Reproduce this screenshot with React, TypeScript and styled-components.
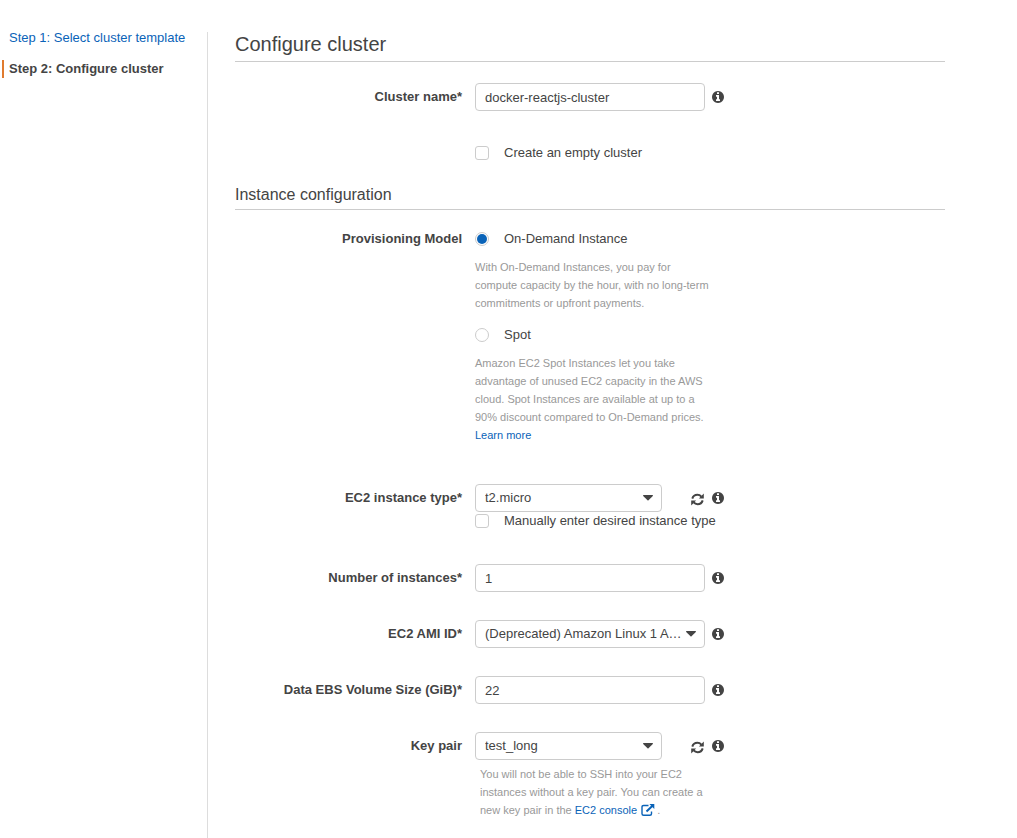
import React, { useState } from "react";
import styled, { createGlobalStyle } from "styled-components";

const ink = "#444444";
const link = "#0a63b8";
const line = "#cccccc";

const GlobalStyle = createGlobalStyle`
  * { box-sizing: border-box; }
  body {
    margin: 0;
    background: #ffffff;
    color: ${ink};
    font-family: "Liberation Sans", Arial, sans-serif;
    font-size: 13px;
    line-height: 18px;
  }
  button, input, select { font: inherit; color: inherit; }
  a { color: ${link}; text-decoration: none; }
  a:hover { text-decoration: underline; }
`;

const Page = styled.div`
  display: flex;
  min-height: 100vh;
  padding-top: 32px;
`;

const Steps = styled.nav`
  flex: 0 0 208px;
  border-right: 1px solid #dddddd;
`;

const StepList = styled.ol`
  display: flex;
  flex-direction: column;
  gap: 16px;
  margin: 0;
  padding: 0 0 0 2px;
  list-style: none;
`;

const Step = styled.li<{ $current?: boolean }>`
  padding-left: 5px;
  border-left: 2px solid ${(p) => (p.$current ? "#e07b2f" : "transparent")};
  font-weight: ${(p) => (p.$current ? 700 : 400)};
  line-height: ${(p) => (p.$current ? "18px" : "12px")};
`;

const Main = styled.main`
  flex: 1;
  min-width: 0;
  padding: 0 72px 19px 27px;
`;

const Title = styled.h1`
  margin: 0 0 21px;
  padding-bottom: 5px;
  border-bottom: 1px solid ${line};
  font-size: 20px;
  font-weight: 400;
  line-height: 24px;
`;

const SectionTitle = styled.h2`
  margin: 23px 0 20px;
  padding-bottom: 4px;
  border-bottom: 1px solid ${line};
  font-size: 16px;
  font-weight: 400;
  line-height: 20px;
`;

const Form = styled.form`
  margin: 0;
`;

const Row = styled.div<{ $gap?: number }>`
  display: grid;
  grid-template-columns: 227px minmax(0, 1fr);
  column-gap: 13px;
  margin-top: ${(p) => p.$gap ?? 0}px;
`;

const Label = styled.label<{ $short?: boolean }>`
  font-weight: 700;
  line-height: ${(p) => (p.$short ? 18 : 28)}px;
  text-align: right;
`;

const Field = styled.div`
  grid-column: 2;
`;

const Controls = styled.div`
  display: flex;
  align-items: center;
  gap: 7px;
`;

const ControlSlot = styled.div`
  display: flex;
  align-items: center;
  justify-content: space-between;
  width: 230px;
`;

const TextInput = styled.input`
  width: 100%;
  height: 28px;
  padding: 0 9px;
  border: 1px solid ${line};
  border-radius: 4px;
  background: #ffffff;
`;

const SelectWrap = styled.div<{ $narrow?: boolean }>`
  position: relative;
  width: ${(p) => (p.$narrow ? "187px" : "100%")};
`;

const Select = styled.select`
  appearance: none;
  width: 100%;
  height: 28px;
  padding: 0 20px 0 9px;
  border: 1px solid ${line};
  border-radius: 4px;
  background: #ffffff;
`;

const Caret = styled.svg`
  position: absolute;
  top: 11px;
  right: 9px;
  pointer-events: none;
`;

const IconButton = styled.button`
  display: flex;
  padding: 0;
  border: 0;
  background: none;
  cursor: pointer;
`;

const RefreshButton = styled(IconButton)`
  padding: 3px 1px 0 0;
`;

const Choice = styled.label`
  display: flex;
  align-items: center;
  gap: 15px;
  white-space: nowrap;
`;

const Checkbox = styled.input`
  appearance: none;
  width: 14px;
  height: 14px;
  margin: 0;
  border: 1px solid ${line};
  border-radius: 3px;
  background: #ffffff;
  &:checked { background: ${link}; box-shadow: inset 0 0 0 2px #ffffff; }
`;

const Radio = styled.input`
  appearance: none;
  width: 14px;
  height: 14px;
  margin: 0;
  border: 1px solid ${line};
  border-radius: 50%;
  background: #ffffff;
  &:checked { padding: 1px; background: ${link} content-box; }
`;

const Hint = styled.p<{ $after?: number }>`
  width: 236px;
  margin: 10px 0 ${(p) => p.$after ?? 0}px;
  color: #999999;
  font-size: 11px;
`;

const KeyHint = styled(Hint)`
  margin-top: 5px;
  padding-left: 5px;
`;

const ExternalLink = styled.a`
  display: inline-flex;
  align-items: center;
  gap: 4px;
  margin-right: 2px;
`;

function Info({ topic }: { topic: string }) {
  return (
    <IconButton type="button" aria-label={`About ${topic}`}>
      <svg width="12" height="12" viewBox="128 128 1536 1536" fill="currentColor">
        <path d="M1152 1376v-160q0-14-9-23t-23-9h-96v-512q0-14-9-23t-23-9h-320q-14 0-23 9t-9 23v160q0 14 9 23t23 9h96v320h-96q-14 0-23 9t-9 23v160q0 14 9 23t23 9h448q14 0 23-9t9-23zm-128-896v-160q0-14-9-23t-23-9h-192q-14 0-23 9t-9 23v160q0 14 9 23t23 9h192q14 0 23-9t9-23zm640 416q0 209-103 385.5t-279.5 279.5-385.5 103-385.5-103-279.5-279.5-103-385.5 103-385.5 279.5-279.5 385.5-103 385.5 103 279.5 279.5 103 385.5z" />
      </svg>
    </IconButton>
  );
}

function Refresh({ topic }: { topic: string }) {
  return (
    <RefreshButton type="button" aria-label={`Refresh ${topic}`}>
      <svg width="13" height="13" viewBox="0 0 13 13" fill="none" stroke="currentColor" strokeWidth="2">
        <path d="M1.3 5.6C2 3.2 4 1.8 6.4 1.8c1.6 0 2.9 0.6 3.9 1.8M11.7 7.4c-0.7 2.4-2.7 3.8-5.1 3.8-1.6 0-2.9-0.6-3.9-1.8" />
        <path d="M12.8 0.6v4.9H7.9zM0.2 12.4V7.5h4.9z" fill="currentColor" stroke="none" />
      </svg>
    </RefreshButton>
  );
}

function TextRow({ id, label, value, gap }: { id: string; label: string; value: string; gap?: number }) {
  return (
    <Row $gap={gap}>
      <Label htmlFor={id}>{label}</Label>
      <Controls>
        <ControlSlot>
          <TextInput id={id} type="text" defaultValue={value} />
        </ControlSlot>
        <Info topic={label} />
      </Controls>
    </Row>
  );
}

function SelectRow(props: {
  id: string;
  label: string;
  value: string;
  gap?: number;
  refresh?: boolean;
  children?: React.ReactNode;
}) {
  const { id, label, value, gap, refresh, children } = props;
  return (
    <Row $gap={gap}>
      <Label htmlFor={id}>{label}</Label>
      <Field>
        <Controls>
          <ControlSlot>
            <SelectWrap $narrow={refresh}>
              <Select id={id}>
                <option>{value}</option>
              </Select>
              <Caret width="10" height="6" viewBox="0 0 10 6" fill="currentColor" aria-hidden="true">
                <path d="M0.6 0h8.8q0.9 0.2 0.4 0.9L5.5 5.3q-0.5 0.4-1 0L0.2 0.9Q-0.3 0.2 0.6 0z" />
              </Caret>
            </SelectWrap>
            {refresh && <Refresh topic={label} />}
          </ControlSlot>
          <Info topic={label} />
        </Controls>
        {children}
      </Field>
    </Row>
  );
}

export default function App() {
  const [model, setModel] = useState("on-demand");
  return (
    <>
      <GlobalStyle />
      <Page>
        <Steps aria-label="Steps">
          <StepList>
            <Step>
              <a href="#step-1">Step 1: Select cluster template</a>
            </Step>
            <Step $current aria-current="step">
              Step 2: Configure cluster
            </Step>
          </StepList>
        </Steps>
        <Main>
          <Title>Configure cluster</Title>
          <Form>
            <TextRow id="cluster-name" label="Cluster name*" value="docker-reactjs-cluster" />
            <Row $gap={33}>
              <Field>
                <Choice>
                  <Checkbox type="checkbox" />
                  Create an empty cluster
                </Choice>
              </Field>
            </Row>

            <SectionTitle>Instance configuration</SectionTitle>
            <Row role="radiogroup" aria-labelledby="model-label">
              <Label as="span" id="model-label" $short>
                Provisioning Model
              </Label>
              <Field>
                <Choice>
                  <Radio
                    type="radio"
                    name="model"
                    checked={model === "on-demand"}
                    onChange={() => setModel("on-demand")}
                  />
                  On-Demand Instance
                </Choice>
                <Hint $after={14}>
                  With On-Demand Instances, you pay for compute capacity by the hour, with no long-term
                  commitments or upfront payments.
                </Hint>
                <Choice>
                  <Radio
                    type="radio"
                    name="model"
                    checked={model === "spot"}
                    onChange={() => setModel("spot")}
                  />
                  Spot
                </Choice>
                <Hint>
                  Amazon EC2 Spot Instances let you take advantage of unused EC2 capacity in the AWS cloud.
                  Spot Instances are available at up to a 90% discount compared to On-Demand prices.{" "}
                  <a href="#spot">Learn more</a>
                </Hint>
              </Field>
            </Row>

            <SelectRow id="instance-type" label="EC2 instance type*" value="t2.micro" gap={40} refresh>
              <Choice>
                <Checkbox type="checkbox" />
                Manually enter desired instance type
              </Choice>
            </SelectRow>
            <TextRow id="instance-count" label="Number of instances*" value="1" gap={34} />
            <SelectRow id="ami" label="EC2 AMI ID*" value="(Deprecated) Amazon Linux 1 A…" gap={28} />
            <TextRow id="volume" label="Data EBS Volume Size (GiB)*" value="22" gap={28} />
            <SelectRow id="key-pair" label="Key pair" value="test_long" gap={28} refresh>
              <KeyHint>
                You will not be able to SSH into your EC2 instances without a key pair. You can create a new
                key pair in the{" "}
                <ExternalLink href="#ec2-console">
                  EC2 console
                  <svg width="14" height="12" viewBox="0 0 14 12" fill="none" stroke="currentColor" aria-hidden="true">
                    <path d="M7.5 1.5H2.6Q1 1.5 1 3V9.7Q1 11.2 2.6 11.2H8.9Q10.5 11.2 10.5 9.7V7.5" strokeWidth="1.4" />
                    <path d="M5.5 7.5L11.5 1.8" strokeWidth="2" />
                    <path d="M8.4 0h4.9v4.9z" fill="currentColor" stroke="none" />
                  </svg>
                </ExternalLink>
                .
              </KeyHint>
            </SelectRow>
          </Form>
        </Main>
      </Page>
    </>
  );
}
